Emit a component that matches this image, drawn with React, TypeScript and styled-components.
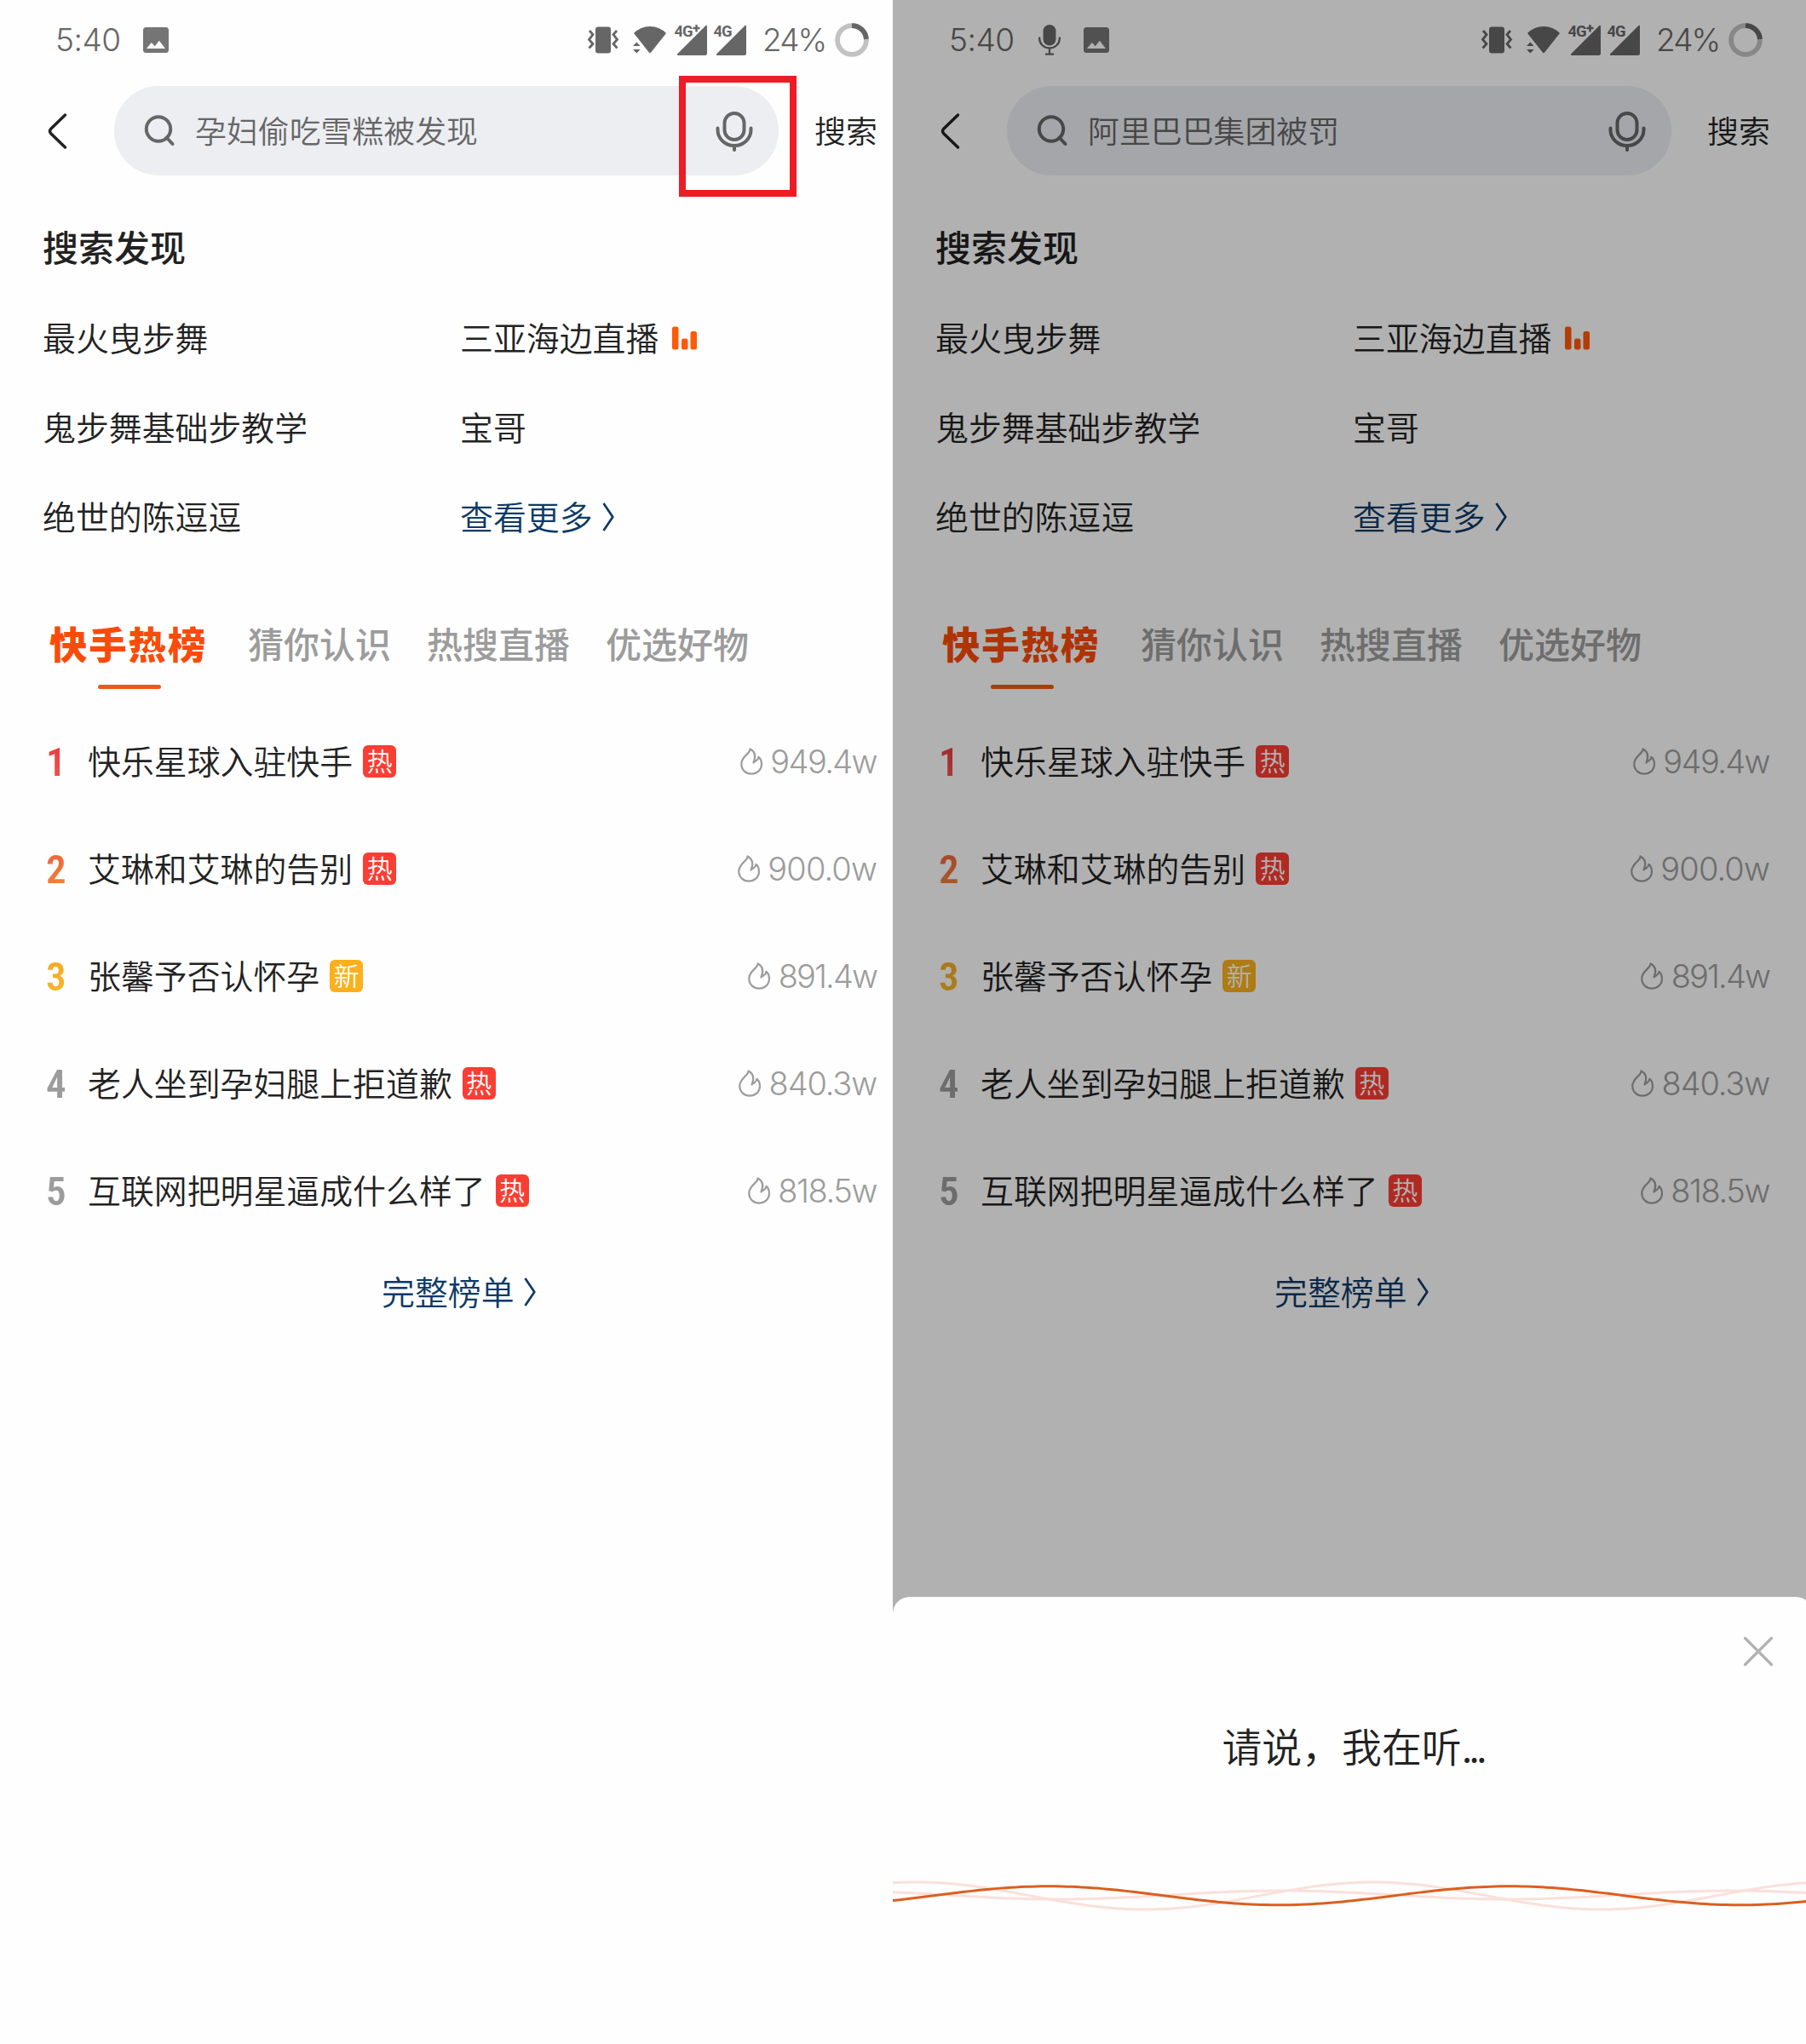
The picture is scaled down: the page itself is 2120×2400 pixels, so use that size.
import React from "react";
import styled, { createGlobalStyle } from "styled-components";

const CJK = '"Noto Sans CJK SC", sans-serif';
const LATIN = 'Inter, "Noto Sans CJK SC", sans-serif';
const INK = "#222222";
const STATUS = "#666666";
const MUTED = "#9c9c9c";

const GlobalStyle = createGlobalStyle`
  * { box-sizing: border-box; }
  body { margin: 0; background: #fff; font-family: ${CJK}; font-weight: 350; color: ${INK}; }
  svg { display: block; flex: none; overflow: visible; }
`;

const Page = styled.main`
  display: flex;
  width: 2120px;
  height: 2400px;
  overflow: hidden;
`;

const Screen = styled.section<{ $width: number }>`
  position: relative;
  flex: none;
  width: ${(p) => p.$width}px;
  height: 2400px;
  overflow: hidden;
  background: #fefefe;
`;

const Content = styled.div<{ $width: number }>`
  display: flex;
  flex-direction: column;
  width: ${(p) => p.$width}px;
`;

const StatusBar = styled.header<{ $shift: number }>`
  display: flex;
  justify-content: space-between;
  align-items: center;
  height: 93px;
  padding: 0 ${(p) => 28 - p.$shift}px 0 ${(p) => 65 + p.$shift}px;
`;

const StatusLeft = styled.div`
  display: flex;
  align-items: center;
  gap: 27px;
`;

const StatusRight = styled.div`
  display: flex;
  align-items: center;
`;

const StatusText = styled.span`
  font: 300 37px/44px ${LATIN};
  letter-spacing: -0.5px;
  color: ${STATUS};
`;

const Clock = styled(StatusText)<{ $width: number }>`
  width: ${(p) => p.$width}px;
  white-space: nowrap;
`;

const Battery = styled(StatusText)`
  width: 76px;
  margin: 0 9px 0 19px;
  letter-spacing: -1.9px;
  white-space: nowrap;
`;

const Spacer = styled.i<{ $width: number }>`
  width: ${(p) => p.$width}px;
`;

const SearchRow = styled.div`
  display: flex;
  align-items: center;
  height: 105px;
  margin-top: 8px;
  padding-left: 56px;
`;

const SearchField = styled.div`
  display: flex;
  align-items: center;
  width: 780px;
  height: 105px;
  margin-left: 55px;
  padding: 0 30px 0 36px;
  border-radius: 52px;
  background: #edeef2;
`;

const Query = styled.span`
  flex: 1;
  margin: -3px 0 0 23px;
  font-size: 36.9px;
  line-height: 54px;
  color: #666;
`;

const SearchButton = styled.span`
  margin: -3px 0 0 42px;
  font-size: 36.9px;
  line-height: 54px;
`;

const Heading = styled.h2`
  height: 60px;
  margin: 53px 0 0 50px;
  font-size: 42px;
  font-weight: 500;
  line-height: 60px;
`;

const Discovery = styled.div`
  display: grid;
  grid-template-columns: 490px 1fr;
  grid-auto-rows: 105px;
  align-items: center;
  margin: 23px 0 0 50px;
`;

const Keyword = styled.div`
  display: flex;
  align-items: center;
  gap: 16px;
  font-size: 38.9px;
  line-height: 56px;
  svg { margin-top: 5px; }
`;

const Link = styled.div`
  display: flex;
  align-items: center;
  gap: 11px;
  font-size: 38.9px;
  line-height: 60px;
  color: #0d3a68;
  svg { margin-top: 4px; }
`;

const FullList = styled(Link)`
  margin: 24px 0 0 448px;
`;

const Tabs = styled.nav`
  display: flex;
  align-items: flex-start;
  gap: 42px;
  height: 84px;
  margin-top: 68px;
  padding-left: 58px;
`;

const Tab = styled.div`
  font-size: 42px;
  font-weight: 500;
  line-height: 60px;
  color: ${MUTED};
`;

const ActiveTab = styled(Tab)`
  position: relative;
  display: flex;
  flex-direction: column;
  align-items: center;
  gap: 19px;
  width: 187px;
  margin-right: 4px;
  font-size: 44.5px;
  font-weight: 800;
  letter-spacing: 1.8px;
  color: #fa4b0a;
  white-space: nowrap;
`;

const ActiveLabel = styled.span`
  width: 187px;
`;

const Underline = styled.i`
  width: 74px;
  height: 5px;
  border-radius: 3px;
  background: #ee5a12;
`;

const TabSpark = styled.span`
  position: absolute;
  left: 113px;
  top: 24px;
`;

const Ranking = styled.ol`
  margin: 22px 0 0;
  padding: 0 19px 0 54px;
  list-style: none;
`;

const RankRow = styled.li`
  display: flex;
  align-items: center;
  height: 126px;
`;

const Rank = styled.span<{ $from: string; $to: string }>`
  width: 49px;
  margin-top: 1px;
  font: 600 47px/54px "Roboto Condensed", Roboto, sans-serif;
  color: transparent;
  background: linear-gradient(170deg, ${(p) => p.$from}, ${(p) => p.$to});
  background-clip: text;
`;

const Title = styled.span`
  margin-top: -4px;
  font-size: 38.9px;
  line-height: 56px;
`;

const Badge = styled.span<{ $color: string }>`
  display: flex;
  justify-content: center;
  width: 39px;
  height: 38px;
  margin-left: 12px;
  border-radius: 6px;
  background: ${(p) => p.$color};
  color: #fff;
  font-size: 30px;
  line-height: 35px;
`;

const Heat = styled.span<{ $tracking: number }>`
  display: flex;
  align-items: center;
  gap: 8.5px;
  margin-left: auto;
  font: 300 38px/46px ${LATIN};
  letter-spacing: ${(p) => p.$tracking}px;
  color: ${MUTED};
`;

const Highlight = styled.div`
  position: absolute;
  left: 797px;
  top: 89px;
  width: 138px;
  height: 142px;
  border: 8px solid #ee1c24;
`;

const Scrim = styled.div`
  position: absolute;
  inset: 0;
  background: rgba(0, 0, 0, 0.3);
`;

const Sheet = styled.aside`
  position: absolute;
  left: 0;
  bottom: 0;
  display: flex;
  flex-direction: column;
  width: 1080px;
  height: 525px;
  border-radius: 20px 20px 0 0;
  background: #fefefe;
`;

const SheetClose = styled.div`
  display: flex;
  justify-content: flex-end;
  padding: 46px 46px 0 0;
`;

const Prompt = styled.p`
  margin: 58px 0 0;
  font-size: 46.9px;
  line-height: 68px;
  text-align: center;
`;

const Dots = styled.span`
  letter-spacing: -4px;
`;

const Waves = styled.div`
  margin-top: 121px;
`;

const VibrateIcon = () => (
  <svg width="36" height="34" viewBox="0 0 36 34">
    <rect x="9" y="1.5" width="18" height="31" rx="3" fill={STATUS} />
    <path d="M2 6l4 4.5-4.500 6 4.500 5-4.500 5M34 6l-4 4.500 4.500 6-4.500 5 4.500 5" fill="none" stroke={STATUS} strokeWidth="2.8" />
  </svg>
);

const WifiIcon = () => (
  <svg width="40" height="34" viewBox="0 0 40 34">
    <path d="M1 9Q9 1 20 1T39 9L21.200 31.500Q20 33 18.800 31.500Z" fill={STATUS} />
    <path d="M0 24l4.300-4.500 4.300 4.500zM0 28l4.300 4.500 4.300-4.500z" fill={STATUS} />
  </svg>
);

const SignalIcon = ({ plus }: { plus?: boolean }) => (
  <svg width="38" height="36" viewBox="0 0 38 36">
    <path d="M3 34.500L37 .5Q38 .5 38 2V33.500Q38 36 35.500 36H4Q2.500 36 3 34.500Z" fill={STATUS} />
    <text x="-0.500" y="13.800" fontFamily="Roboto, sans-serif" fontWeight="700" fontSize="18.500" textLength="22" fill={STATUS} stroke="#fefefe" strokeWidth="2.500" paintOrder="stroke">4G</text>
    {plus && (
      <g fill="none">
        <path d="M25.500 0v8.500M21.500 4h8" stroke="#fefefe" strokeWidth="5" />
        <path d="M25.500 0v8.500M21.500 4h8" stroke={STATUS} strokeWidth="2.400" />
      </g>
    )}
  </svg>
);

const RingIcon = () => (
  <svg width="40" height="40" viewBox="0 0 40 40" fill="none" strokeWidth="5.800">
    <circle cx="20" cy="20" r="16.900" stroke="#c2c2c2" />
    <path d="M20 3.100A16.900 16.900 0 0 1 36.900 19" stroke={STATUS} />
  </svg>
);

const PictureIcon = () => (
  <svg width="30" height="30" viewBox="0 0 30 30">
    <rect width="30" height="30" rx="3.500" fill="#757575" />
    <path d="M4 25l5.800-7 4 4.300 5-6.500L26 25z" fill="#fefefe" />
  </svg>
);

const RecordingIcon = () => (
  <svg width="26" height="36" viewBox="0 0 26 36">
    <rect x="5.500" y="0" width="15" height="24.500" rx="7.500" fill={STATUS} />
    <path d="M1.200 14.500v2a11.800 11 0 0 0 23.600 0v-2M13 27.500v6.500M8 34.700h10" fill="none" stroke={STATUS} strokeWidth="2.300" />
  </svg>
);

const BackIcon = () => (
  <svg width="23" height="42" viewBox="0 0 23 42">
    <path d="M20.500 2L3.500 18.500Q1.500 21 3.500 23.500L20.500 40" fill="none" stroke={INK} strokeWidth="3.400" strokeLinecap="round" />
  </svg>
);

const SearchIcon = () => (
  <svg width="36" height="38" viewBox="0 0 36 38" fill="none" stroke={STATUS} strokeWidth="4">
    <circle cx="16" cy="16.500" r="14.200" />
    <path d="M25.500 26.500l7 7.500" strokeLinecap="round" />
  </svg>
);

const MicIcon = () => (
  <svg width="44" height="48" viewBox="0 0 44 48" fill="none" stroke={STATUS} strokeWidth="4" strokeLinecap="round">
    <rect x="10.500" y="3" width="23" height="31" rx="11.500" />
    <path d="M2.500 20.500v2C2.500 33 11.500 41 22 41S41.500 33 41.500 22.500v-2M22 42v4" />
  </svg>
);

const ChevronIcon = () => (
  <svg width="14" height="34" viewBox="0 0 14 34">
    <path d="M1.500 1L12.300 17 1.500 33" fill="none" stroke="#0d3a68" strokeWidth="2.700" strokeLinejoin="round" />
  </svg>
);

const LiveIcon = () => (
  <svg width="30" height="28" viewBox="0 0 30 28" fill="#ff5a0a">
    <rect width="7.500" height="27" y="0.500" rx="2.500" />
    <rect x="11" y="14.500" width="7.500" height="13" rx="2.500" />
    <rect x="21.500" y="6" width="7.500" height="21.500" rx="2.500" />
  </svg>
);

const FLAME = "M11.500 1.500C12 7 1.300 9.500 1.300 19C1.300 26.500 7 30.600 13 30.600C19 30.600 25 26.500 25 19C25 15.500 23.800 12.800 21.500 10.800C21.300 14.500 18.800 14.500 15.500 17.500C17.800 12 18.500 5 11.500 1.500Z";

const FlameIcon = () => (
  <svg width="27" height="32" viewBox="0 0 27 32">
    <path d={FLAME} fill="none" stroke={MUTED} strokeWidth="2.200" strokeLinejoin="round" />
  </svg>
);

const SparkIcon = () => (
  <svg width="13" height="17" viewBox="0 0 26 32">
    <path d={FLAME} fill="#fff" stroke="#fa4b0a" strokeWidth="5" />
  </svg>
);

const CloseIcon = () => (
  <svg width="36" height="36" viewBox="0 0 36 36">
    <path d="M2.500 2.500l31 31M33.500 2.500l-31 31" stroke="#b2b2b2" strokeWidth="3.200" strokeLinecap="round" />
  </svg>
);

/** Polyline of a cosine with the given period whose first crest is at `crest`. */
const wave = (mid: number, amp: number, period: number, crest: number) => {
  const pts: string[] = [];
  for (let x = 0; x <= 1080; x += 6) {
    pts.push(`${x},${(mid - amp * Math.cos(((x - crest) / period) * 2 * Math.PI)).toFixed(2)}`);
  }
  return pts.join(" ");
};

const WaveForm = () => (
  <svg width="1080" height="44" viewBox="0 0 1080 44" fill="none">
    <polyline points={wave(22, 16, 536, 28)} stroke="#fbe0da" strokeWidth="3" />
    <polyline points={wave(21, 5, 528, -70)} stroke="#fbe0da" strokeWidth="3" />
    <polyline points={wave(21.8, 11, 541, 183)} stroke="#dc5f1e" strokeWidth="3" />
  </svg>
);

const HOT = "#fb3d33";
const NEW = "#fbb01c";

const ranking = [
  { title: "快乐星球入驻快手", tag: "热", color: HOT, heat: "949.4w", tracking: -1.6, from: "#e8393f", to: "#f25a4e" },
  { title: "艾琳和艾琳的告别", tag: "热", color: HOT, heat: "900.0w", tracking: -0.9, from: "#f0603a", to: "#ee8a3c" },
  { title: "张馨予否认怀孕", tag: "新", color: NEW, heat: "891.4w", tracking: -1.9, from: "#f5a623", to: "#f5bb2c" },
  { title: "老人坐到孕妇腿上拒道歉", tag: "热", color: HOT, heat: "840.3w", tracking: -1.15, from: MUTED, to: MUTED },
  { title: "互联网把明星逼成什么样了", tag: "热", color: HOT, heat: "818.5w", tracking: -1.4, from: MUTED, to: MUTED },
];

type SearchScreenProps = { width: number; query: string; listening?: boolean };

const SearchScreen = ({ width, query, listening }: SearchScreenProps) => (
  <Screen $width={width}>
    <Content $width={1048}>
      <StatusBar $shift={listening ? 1 : 0}>
        <StatusLeft>
          <Clock $width={listening ? 78 : 76}>5:40</Clock>
          {listening && <RecordingIcon />}
          <PictureIcon />
        </StatusLeft>
        <StatusRight>
          <VibrateIcon />
          <Spacer $width={17} />
          <WifiIcon />
          <Spacer $width={9} />
          <SignalIcon plus />
          <Spacer $width={8} />
          <SignalIcon />
          <Battery>24%</Battery>
          <RingIcon />
        </StatusRight>
      </StatusBar>
      <SearchRow>
        <BackIcon />
        <SearchField>
          <SearchIcon />
          <Query>{query}</Query>
          <MicIcon />
        </SearchField>
        <SearchButton>搜索</SearchButton>
      </SearchRow>
      <Heading>搜索发现</Heading>
      <Discovery>
        <Keyword>最火曳步舞</Keyword>
        <Keyword>三亚海边直播<LiveIcon /></Keyword>
        <Keyword>鬼步舞基础步教学</Keyword>
        <Keyword>宝哥</Keyword>
        <Keyword>绝世的陈逗逗</Keyword>
        <Link>查看更多<ChevronIcon /></Link>
      </Discovery>
      <Tabs>
        <ActiveTab>
          <ActiveLabel>快手热榜</ActiveLabel>
          <TabSpark><SparkIcon /></TabSpark>
          <Underline />
        </ActiveTab>
        <Tab>猜你认识</Tab>
        <Tab>热搜直播</Tab>
        <Tab>优选好物</Tab>
      </Tabs>
      <Ranking>
        {ranking.map((item, i) => (
          <RankRow key={item.title}>
            <Rank $from={item.from} $to={item.to}>{i + 1}</Rank>
            <Title>{item.title}</Title>
            <Badge $color={item.color}>{item.tag}</Badge>
            <Heat $tracking={item.tracking}><FlameIcon />{item.heat}</Heat>
          </RankRow>
        ))}
      </Ranking>
      <FullList>完整榜单<ChevronIcon /></FullList>
    </Content>
    {listening && (
      <>
        <Scrim />
        <Sheet>
          <SheetClose><CloseIcon /></SheetClose>
          <Prompt>请说，我在听<Dots>...</Dots></Prompt>
          <Waves><WaveForm /></Waves>
        </Sheet>
      </>
    )}
    {!listening && <Highlight />}
  </Screen>
);

export default function App() {
  return (
    <Page>
      <GlobalStyle />
      <SearchScreen width={1048} query="孕妇偷吃雪糕被发现" />
      <SearchScreen width={1072} query="阿里巴巴集团被罚" listening />
    </Page>
  );
}
